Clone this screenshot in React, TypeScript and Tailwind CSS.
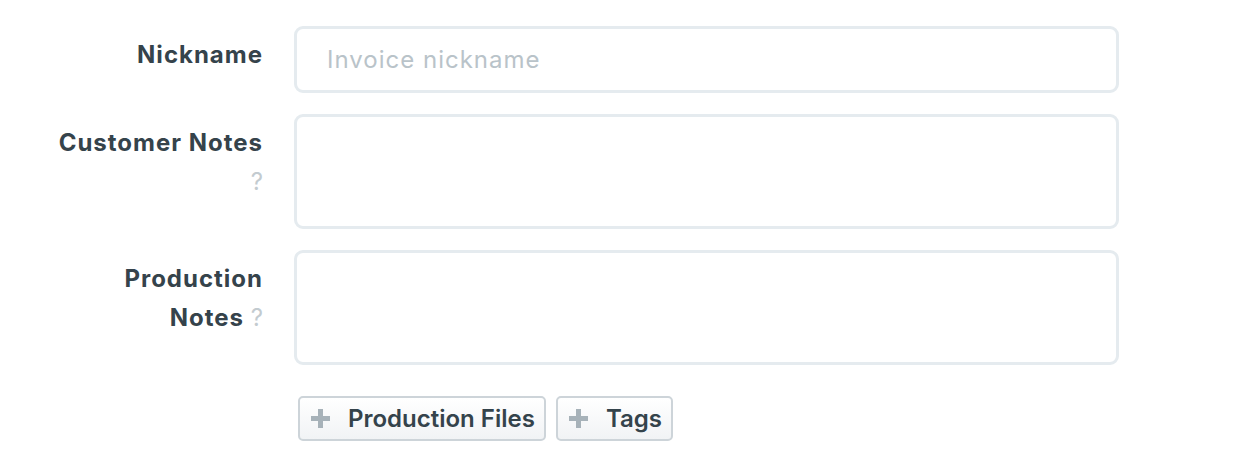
function Label({ children }: { children: React.ReactNode }) {
  return (
    <div className="w-[213px] shrink-0 pt-[9px] text-right text-[24px] font-bold leading-[39px] tracking-[1px] text-[#35434b]">
      {children}
    </div>
  );
}

function Help() {
  return <span className="font-normal tracking-normal text-[#c3cbd0]">?</span>;
}

function PlusIcon() {
  return (
    <svg width="19" height="19" viewBox="0 0 19 19" className="shrink-0">
      <rect x="7" y="0" width="5" height="19" fill="#a7b2b9" />
      <rect x="0" y="7" width="19" height="5" fill="#a7b2b9" />
    </svg>
  );
}

function AddButton({ label }: { label: string }) {
  return (
    <button className="flex h-[45px] items-center gap-[18px] rounded-[5px] border-2 border-[#cdd4d9] bg-gradient-to-b from-white to-[#f1f3f5] pl-[11px] pr-[9px] text-[24px] font-semibold text-[#34434b]">
      <PlusIcon />
      {label}
    </button>
  );
}

export default function App() {
  return (
    <div
      className="h-[466px] w-[1238px] bg-white pl-[50px] pt-[26px]"
      style={{ fontFamily: "Inter, 'Noto Sans', sans-serif" }}
    >
      <div className="flex flex-col gap-[21px]">
        <div className="flex gap-[31px]">
          <Label>Nickname</Label>
          <input
            placeholder="Invoice nickname"
            className="h-[67px] w-[825px] rounded-[9px] border-[3px] border-[#e5ebef] px-[30px] text-[24px] tracking-[1px] text-[#35434b] outline-none placeholder:text-[#b9c3c9]"
          />
        </div>
        <div className="flex gap-[31px]">
          <Label>
            Customer Notes <Help />
          </Label>
          <textarea className="h-[115px] w-[825px] resize-none rounded-[9px] border-[3px] border-[#e5ebef] px-[30px] py-[14px] text-[24px] outline-none" />
        </div>
        <div className="flex gap-[31px]">
          <Label>
            <span>Production</span> <span>Notes</span> <Help />
          </Label>
          <textarea className="h-[115px] w-[825px] resize-none rounded-[9px] border-[3px] border-[#e5ebef] px-[30px] py-[14px] text-[24px] outline-none" />
        </div>
      </div>
      <div className="ml-[248px] mt-[31px] flex gap-[10px]">
        <AddButton label="Production Files" />
        <AddButton label="Tags" />
      </div>
    </div>
  );
}
